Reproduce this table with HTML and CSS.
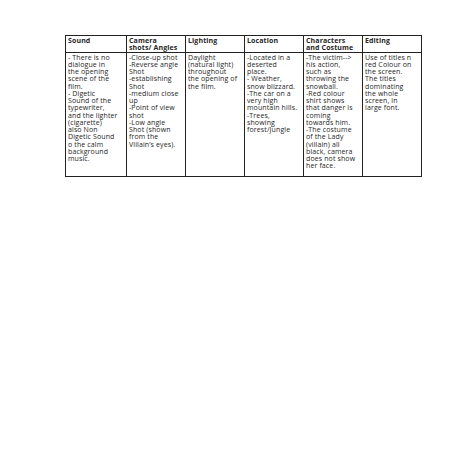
FILE: index.html
```html
<!DOCTYPE html>
<html>
<head>
<meta charset="utf-8">
<link rel="stylesheet" href="styles.css">
</head>
<body>
<div class="page">
<table class="grid">
<colgroup>
<col class="c1"><col class="c"><col class="c"><col class="c"><col class="c"><col class="c">
</colgroup>
<thead>
<tr>
<th>Sound</th>
<th>Camera<br>shots/ Angles</th>
<th>Lighting</th>
<th>Location</th>
<th>Characters<br>and Costume</th>
<th>Editing</th>
</tr>
</thead>
<tbody>
<tr>
<td>- There is no<br>dialogue in<br>the opening<br>scene of the<br>film.<br>- Digetic<br>Sound of the<br>typewriter,<br>and the lighter<br>(cigarette)<br>also Non<br>Digetic Sound<br>o the calm<br>background<br>music.</td>
<td>-Close-up shot<br>-Reverse angle<br>Shot<br>-establishing<br>Shot<br>-medium close<br>up<br>-Point of view<br>shot<br>-Low angle<br>Shot (shown<br>from the<br>Villain’s eyes).</td>
<td>Daylight<br>(natural light)<br>throughout<br>the opening of<br>the film.</td>
<td>-Located in a<br>deserted<br>place.<br>- Weather,<br>snow blizzard.<br>-The car on a<br>very high<br>mountain hills.<br>-Trees,<br>showing<br>forest/Jungle</td>
<td>-The victim--&gt;<br>his action,<br>such as<br>throwing the<br>snowball.<br>-Red colour<br>shirt shows<br>that danger is<br>coming<br>towards him.<br>-The costume<br>of the Lady<br>(villain) all<br>black, camera<br>does not show<br>her face.</td>
<td>Use of titles n<br>red Colour on<br>the screen.<br>The titles<br>dominating<br>the whole<br>screen, in<br>large font.</td>
</tr>
</tbody>
</table>
</div>
</body>
</html>
```
FILE: styles.css
```css
html, body {
  margin: 0;
  padding: 0;
  background: #ffffff;
}
.page {
  padding: 35px 0 0 65px;
}
.grid {
  border-collapse: collapse;
  table-layout: fixed;
  width: 356px;
  font-family: "Open Sans", "Liberation Sans", sans-serif;
  font-size: 7px;
  line-height: 7.25px;
  letter-spacing: 0.12px;
  color: #262626;
  white-space: nowrap;
}
.c1 { width: 61px; }
.c { width: 59px; }
.grid th, .grid td {
  border: 1px solid #222222;
  text-align: left;
  vertical-align: top;
  padding: 1px 2px 0 2px;
  overflow: hidden;
}
.grid th {
  font-weight: bold;
  height: 14px;
  padding-top: 1px;
}
.grid td {
  height: 122px;
  padding-top: 1px;
}
```
